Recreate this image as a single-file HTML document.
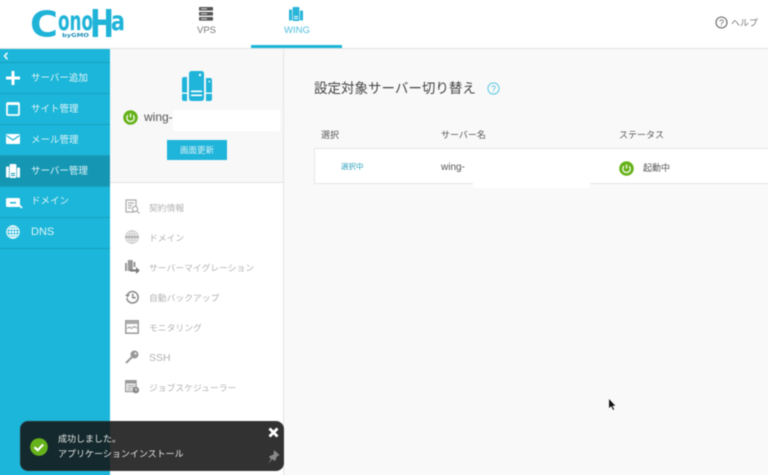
<!DOCTYPE html>
<html lang="ja"><head><meta charset="utf-8"><style>
*{box-sizing:border-box}
html,body{margin:0;padding:0;width:768px;height:475px;overflow:hidden}
body{background:#f9f9f9;font-family:"Liberation Sans","Noto Sans CJK JP",sans-serif;}
#clip{position:absolute;left:0;top:0;width:768px;height:475px;overflow:hidden;contain:paint}
#w{position:absolute;left:0;top:0;width:768px;height:475px;filter:blur(.45px)}
.a{position:absolute}
.t{position:absolute;white-space:nowrap;line-height:14px}
.side{left:-6px;top:49px;width:116px;height:436px;background:#1bb6d9}
.sep{left:-6px;width:116px;height:1px;background:#18a0bf}
.sl{left:31px;color:#dff4f9;font-size:9.500px}
.ml{left:149px;color:#b2b2b2;font-size:8.800px}
svg{position:absolute;overflow:visible}
</style></head><body><div id="clip"><div id="w">
<!-- header -->
<div class="a" style="left:-6px;top:-6px;width:780px;height:54px;background:#fff"></div>
<div class="a" style="left:-6px;top:48px;width:780px;height:1px;background:#e2e2e2"></div>
<svg style="left:0;top:0" width="140" height="48">
<g fill="#1fb3d8" font-family="'DejaVu Sans','Liberation Sans',sans-serif" font-weight="bold">
<text x="30" y="36.500" font-size="36" textLength="28" lengthAdjust="spacingAndGlyphs">C</text>
<text x="58" y="30" font-size="27" textLength="35" lengthAdjust="spacingAndGlyphs">ono</text>
<text x="90" y="37" font-size="38" textLength="24" lengthAdjust="spacingAndGlyphs">H</text>
<text x="111" y="30" font-size="27" textLength="14" lengthAdjust="spacingAndGlyphs">a</text>
<text x="62" y="37" font-size="5.500" textLength="27" lengthAdjust="spacingAndGlyphs" fill="#1f8fb8">byGMO</text>
</g></svg>
<!-- VPS icon -->
<svg style="left:199px;top:7px" width="15" height="14"><g fill="#555">
<rect x="0" y="0" width="14" height="3.600" rx=".6"/><rect x="0" y="5" width="14" height="3.600" rx=".6"/><rect x="0" y="10" width="14" height="3.600" rx=".6"/></g>
<g fill="#ddd"><rect x="2" y="1.300" width="6" height="1"/><rect x="2" y="6.300" width="6" height="1"/><rect x="2" y="11.300" width="6" height="1"/></g></svg>
<div class="t" style="left:197px;top:24px;font-size:9.500px;color:#777">VPS</div>
<!-- WING icon -->
<svg style="left:289px;top:7px" width="15" height="14"><g fill="#27b4d8">
<rect x="0" y="2.500" width="3" height="11" rx=".8"/><rect x="11" y="3.500" width="3" height="10" rx=".8"/><rect x="3.600" y="0" width="6.800" height="14" rx="1"/></g>
<rect x="5" y="9" width="4" height="1" fill="#fff"/><rect x="5" y="11" width="4" height="1" fill="#fff"/></svg>
<div class="t" style="left:284px;top:24px;font-size:9.500px;color:#4fc0de">WING</div>
<div class="a" style="left:251px;top:45px;width:91px;height:3px;background:#1bb6d9"></div>
<!-- help -->
<svg style="left:715px;top:16px" width="13" height="13"><circle cx="6.500" cy="6.500" r="5.500" fill="none" stroke="#666" stroke-width="1.100"/><text x="6.500" y="10" font-size="9" text-anchor="middle" fill="#666" font-family="Liberation Sans">?</text></svg>
<div class="t" style="left:731px;top:16px;font-size:9px;color:#777">ヘルプ</div>

<!-- sidebar -->
<div class="a side"></div>
<div class="a" style="left:-6px;top:155px;width:116px;height:31px;background:#1597b4"></div>
<div class="a sep" style="top:62px"></div><div class="a sep" style="top:93px"></div><div class="a sep" style="top:124px"></div><div class="a sep" style="top:155px"></div><div class="a sep" style="top:186px"></div><div class="a sep" style="top:217px"></div><div class="a sep" style="top:248px"></div>
<svg style="left:3px;top:52px" width="6" height="8"><path d="M4.500 .8L1.500 4l3 3.200" fill="none" stroke="#fff" stroke-width="1.500"/></svg>
<svg style="left:6px;top:71px" width="15" height="14"><path d="M5.500 0h3v5.500H14v3H8.500V14h-3V8.500H0v-3h5.500z" fill="#fff"/></svg>
<div class="t sl" style="top:72px">サーバー追加</div>
<svg style="left:6px;top:102px" width="14" height="14"><rect x="1" y="1" width="12" height="12" fill="none" stroke="#fff" stroke-width="1.800" rx="1"/><rect x="1" y="1" width="12" height="2" fill="#fff"/></svg>
<div class="t sl" style="top:103px">サイト管理</div>
<svg style="left:6px;top:134px" width="14" height="10"><rect width="14" height="10" rx="1" fill="#fff"/><path d="M.5 1.500L7 6l6.500-4.500" fill="none" stroke="#1bb6d9" stroke-width="1.200"/></svg>
<div class="t sl" style="top:134px">メール管理</div>
<svg style="left:6px;top:164px" width="15" height="14"><g fill="#fff"><rect x="0" y="2.500" width="3" height="11" rx=".8"/><rect x="11" y="3.500" width="3" height="10" rx=".8"/><rect x="3.600" y="0" width="6.800" height="14" rx="1"/></g><rect x="5" y="9" width="4" height="1" fill="#1597b4"/><rect x="5" y="11" width="4" height="1" fill="#1597b4"/></svg>
<div class="t sl" style="top:165px">サーバー管理</div>
<svg style="left:6px;top:198px" width="17" height="11"><rect width="14" height="9" rx="1.500" fill="#fff"/><rect x="4" y="4" width="6" height="1.500" fill="#1bb6d9"/><path d="M13 7l3 3" stroke="#fff" stroke-width="1.800"/></svg>
<div class="t sl" style="top:195px">ドメイン</div>
<svg style="left:6px;top:225px" width="14" height="14"><g fill="none" stroke="#fff" stroke-width="1"><circle cx="7" cy="7" r="6.200"/><ellipse cx="7" cy="7" rx="3" ry="6.200"/><path d="M7 .8V13.200M1 7h12M1.800 4h10.400M1.800 10h10.400"/></g></svg>
<div class="t sl" style="top:225px;font-size:11px">DNS</div>

<!-- middle -->
<div class="a" style="left:110px;top:49px;width:174px;height:436px;background:#fff;border-right:1px solid #e4e4e4"></div>
<div class="a" style="left:110px;top:49px;width:173px;height:134px;background:#f8f8f8;border-bottom:1px solid #e2e2e2"></div>
<svg style="left:181px;top:71px" width="31" height="31"><g fill="#1fb4d9">
<path d="M1 8q0-2 2-2h3V30H3q-2 0-2-2z"/><path d="M25 7h4q2 0 2 2V28q0 2-2 2h-4z"/><rect x="8" y="0" width="15" height="30" rx="2.500"/></g>
<circle cx="19" cy="4" r="1.200" fill="#fff"/><circle cx="28.300" cy="10.500" r=".9" fill="#fff"/>
<g fill="#fff"><rect x="10" y="19.500" width="11" height="1.600"/><rect x="10" y="23.500" width="11" height="1.600"/><rect x="1" y="21.500" width="5" height="1.300"/><rect x="25" y="21.500" width="6" height="1.300"/></g></svg>
<svg style="left:123px;top:110px" width="15" height="15"><circle cx="7.500" cy="7.500" r="7.300" fill="#66b21a"/><path d="M4.900 5.200a3.700 3.700 0 1 0 5.200 0M7.500 3.500v4" fill="none" stroke="#fff" stroke-width="1.200"/></svg>
<div class="t" style="left:144px;top:110px;font-size:12px;color:#555">wing-</div>
<div class="a" style="left:173px;top:110px;width:107px;height:21px;background:#fff"></div>
<div class="a" style="left:167px;top:140px;width:60px;height:20px;background:#1fb4d9;color:#d9f2f8;font-size:8.500px;text-align:center;line-height:20px">画面更新</div>

<svg style="left:125px;top:199px" width="16" height="16"><g fill="none" stroke="#aaa" stroke-width="1.200"><path d="M9 13H1V1h10v6"/><path d="M3 4h6M3 6.500h4M3 9h3"/><circle cx="10" cy="10" r="2.600"/><path d="M12 12l2.500 2.500"/></g></svg>
<div class="t ml" style="top:201px">契約情報</div>
<svg style="left:125px;top:230px" width="14" height="14"><g fill="none" stroke="#c4c4c4" stroke-width=".8"><circle cx="7" cy="7" r="6.400"/><ellipse cx="7" cy="7" rx="3" ry="6.400"/><path d="M7 .6v12.800M1.500 3.800h11M1.500 10.200h11"/></g><rect x="0" y="5.500" width="14" height="3" fill="#bbb"/></svg>
<div class="t ml" style="top:231px">ドメイン</div>
<svg style="left:125px;top:260px" width="15" height="15"><g fill="#999"><rect x="0" y="3" width="2" height="8"/><rect x="2.800" y="0" width="5" height="11" rx=".8"/><rect x="8.500" y="2" width="2" height="5"/><path d="M5 9.500h6V7l3.800 3.500L11 14v-2.500H5z" fill="#777"/></g></svg>
<div class="t ml" style="top:261px">サーバーマイグレーション</div>
<svg style="left:125px;top:290px" width="15" height="15"><g fill="none" stroke="#888" stroke-width="1.500"><path d="M2.500 4.500A5.700 5.700 0 1 1 1.800 8"/><path d="M7.800 3.800V7.800h3"/></g><path d="M0 4.500h5L2.500 7.500z" fill="#888"/></svg>
<div class="t ml" style="top:291px">自動バックアップ</div>
<svg style="left:125px;top:320px" width="14" height="14"><rect x=".8" y=".8" width="12.400" height="12.400" fill="none" stroke="#999" stroke-width="1.500"/><rect x="1" y="1" width="12" height="3" fill="#aaa"/><path d="M2 8.500l2.500-1.500 2 1.500 2.500-2 3 1.500" fill="none" stroke="#999" stroke-width="1"/></svg>
<div class="t ml" style="top:321px">モニタリング</div>
<svg style="left:125px;top:350px" width="14" height="14"><circle cx="9.500" cy="4.500" r="4" fill="#999"/><path d="M7 7L1 13" stroke="#999" stroke-width="2"/><circle cx="10.500" cy="3.500" r="1" fill="#fff"/></svg>
<div class="t ml" style="top:351px;font-size:10.500px">SSH</div>
<svg style="left:125px;top:380px" width="15" height="14"><rect x=".6" y=".6" width="10.500" height="11" fill="#eee" stroke="#999" stroke-width="1.200"/><rect x="1" y="1" width="10" height="2.500" fill="#999"/><path d="M2.500 5.500h7M2.500 7.500h7M2.500 9.500h4" stroke="#aaa"/><circle cx="10.800" cy="10" r="3.300" fill="#888"/><path d="M10.800 8v2h1.500" stroke="#fff" stroke-width=".7" fill="none"/></svg>
<div class="t ml" style="top:381px">ジョブスケジューラー</div>

<!-- main -->
<div class="t" style="left:314px;top:81px;font-size:13.500px;color:#444;line-height:16px">設定対象サーバー切り替え</div>
<svg style="left:487px;top:82px" width="13" height="13"><circle cx="6.500" cy="6.500" r="5.600" fill="none" stroke="#5cc8e2" stroke-width="1"/><text x="6.500" y="10" font-size="9" text-anchor="middle" fill="#4dbfdc" font-family="Liberation Sans">?</text></svg>
<div class="t" style="left:321px;top:128px;font-size:9px;color:#555">選択</div>
<div class="t" style="left:441px;top:128px;font-size:9px;color:#555">サーバー名</div>
<div class="t" style="left:619px;top:128px;font-size:9px;color:#555">ステータス</div>
<div class="a" style="left:314px;top:148px;width:460px;height:36px;background:#fff;border:1px solid #e6e6e6;border-right:0"></div>
<div class="t" style="left:341px;top:160px;font-size:7.500px;color:#2a9fbc">選択中</div>
<div class="t" style="left:441px;top:161px;font-size:10px;color:#555">wing-</div>
<div class="a" style="left:473px;top:150px;width:117px;height:38px;background:#fff"></div>
<svg style="left:619px;top:161px" width="15" height="15"><circle cx="7.500" cy="7.500" r="7.300" fill="#66b21a"/><path d="M4.900 5.200a3.700 3.700 0 1 0 5.200 0M7.500 3.500v4" fill="none" stroke="#fff" stroke-width="1.200"/></svg>
<div class="t" style="left:643px;top:161px;font-size:9px;color:#555">起動中</div>
<!-- cursor -->
<svg style="left:608px;top:398px" width="9" height="14"><path d="M.8 .5v10l2.400-2 1.700 3.800 1.600-.7-1.700-3.600h3z" fill="#111" stroke="#fff" stroke-width=".5"/></svg>

<!-- toast -->
<div class="a" style="left:20px;top:421px;width:264px;height:50px;border-radius:8px;background:rgba(20,20,20,.87);border:1px solid rgba(60,60,60,.5)"></div>
<svg style="left:30px;top:438px" width="18" height="18"><circle cx="9" cy="9" r="8.800" fill="#66b21a"/><path d="M4.500 9.200l3.200 3 5.500-5.700" fill="none" stroke="#fff" stroke-width="2.200"/></svg>
<div class="t" style="left:58px;top:432px;font-size:9px;color:#e8e8e8">成功しました。</div>
<div class="t" style="left:58px;top:447px;font-size:9px;color:#e8e8e8">アプリケーションインストール</div>
<svg style="left:268px;top:427px" width="11" height="11"><path d="M1.500 1.500l8 8M9.500 1.500l-8 8" stroke="#fff" stroke-width="2.800"/></svg>
<svg style="left:267px;top:450px" width="13" height="16"><path d="M7 0l5.500 5-1.500 1-1 .2-1.500 3.800-1 1-2-2L1 14l3-5-2-2 1-1 3.500-1.500.2-1.200z" fill="#8a8a8a"/></svg>
</div></div></body></html>
